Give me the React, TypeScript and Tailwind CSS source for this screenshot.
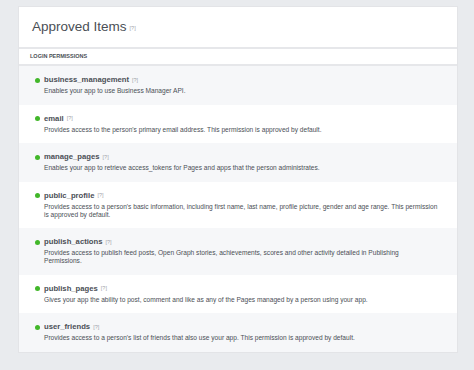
const permissions = [
  {
    name: "business_management",
    desc: "Enables your app to use Business Manager API.",
  },
  {
    name: "email",
    desc: "Provides access to the person's primary email address. This permission is approved by default.",
  },
  {
    name: "manage_pages",
    desc: "Enables your app to retrieve access_tokens for Pages and apps that the person administrates.",
  },
  {
    name: "public_profile",
    desc: "Provides access to a person's basic information, including first name, last name, profile picture, gender and age range. This permission is approved by default.",
  },
  {
    name: "publish_actions",
    desc: "Provides access to publish feed posts, Open Graph stories, achievements, scores and other activity detailed in Publishing\nPermissions.",
  },
  {
    name: "publish_pages",
    desc: "Gives your app the ability to post, comment and like as any of the Pages managed by a person using your app.",
  },
  {
    name: "user_friends",
    desc: "Provides access to a person's list of friends that also use your app. This permission is approved by default.",
  },
];

function Help({ className = "" }: { className?: string }) {
  return (
    <span className={"ml-[3px] text-[5.5px] text-[#a0a3a9] " + className}>
      [?]
    </span>
  );
}

export default function App() {
  return (
    <div
      className="min-h-[370px] bg-[#e9ebee] pt-[7px] pb-[18px]"
      style={{ fontFamily: '"Liberation Sans", Arial, sans-serif' }}
    >
      <div className="ml-[19px] w-[438px] bg-white shadow-[0_0_0_1px_#e3e4e7]">
        {/* Header */}
        <div className="flex h-[42px] items-center border-b-[2px] border-[#e6e7ea] pl-[13px]">
          <h1 className="text-[13.5px] leading-none text-[#4b4f56]">
            Approved Items
          </h1>
          <Help className="mt-[2px]" />
        </div>

        {/* Section label */}
        <div className="flex h-[17px] items-center border-b-[2px] border-[#e6e7ea] pl-[11px]">
          <span className="text-[5.5px] font-bold uppercase leading-none text-[#4b4f56]">
            Login Permissions
          </span>
        </div>

        {permissions.map((p, i) => (
          <div
            key={p.name}
            className={
              "flex pl-[16px] pr-[14px] pt-[9px] pb-[9.5px] " +
              (i % 2 === 0 ? "bg-[#f6f7f9]" : "bg-white")
            }
          >
            <div className="mt-[2.5px] h-[5px] w-[5px] shrink-0 rounded-full bg-[#42b72a]" />
            <div className="ml-[4px] flex-1">
              <div className="flex h-[10px] items-center">
                <span className="text-[7.7px] font-bold leading-none text-[#4b4f56]">
                  {p.name}
                </span>
                <Help />
              </div>
              <p className="mt-[2px] whitespace-pre-line text-[6.6px] leading-[8px] text-[#4b4f56]">
                {p.desc}
              </p>
            </div>
          </div>
        ))}
      </div>
    </div>
  );
}
